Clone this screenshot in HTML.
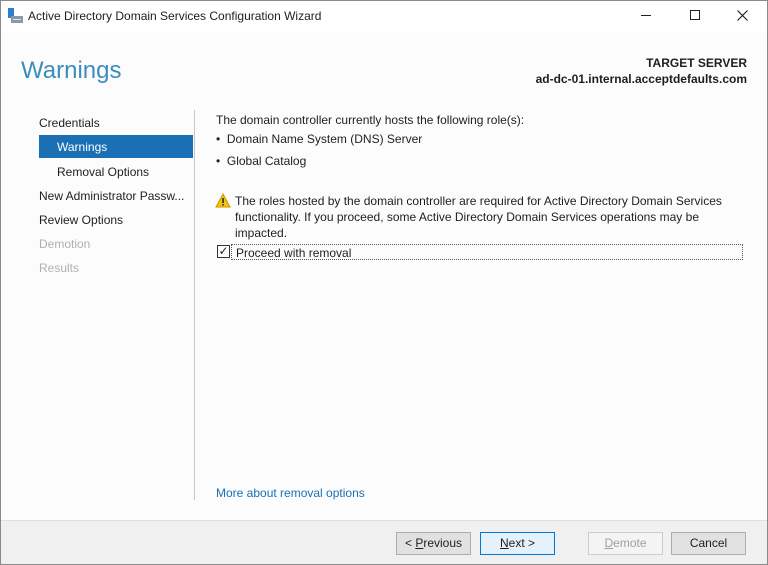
<!DOCTYPE html><html><head><style>
*{margin:0;padding:0;box-sizing:border-box}
body{width:768px;height:565px;overflow:hidden;font-family:"Liberation Sans",sans-serif;font-size:12px;color:#1e1e1e;background:#fcfcfc;position:relative}
.a{position:absolute;white-space:nowrap}
.btn{position:absolute;top:532px;height:23px;width:75px;border:1px solid #adadad;background:#e1e1e1;text-align:center;line-height:21px;font-size:12px}
</style></head><body>
<div class="a" style="left:0;top:0;width:768px;height:565px;border:1px solid #8a8a8a;z-index:5;pointer-events:none"></div>
<div class="a" style="left:0;top:0;width:768px;height:32px;background:#fff"></div>
<svg class="a" style="left:8px;top:8px" width="16" height="16"><rect x="0" y="0" width="6" height="10" fill="#2b7fd0"/><rect x="3" y="8" width="12" height="7" fill="#8a98a8"/><rect x="5" y="11" width="8" height="1" fill="#dde"/></svg>
<div class="a" style="left:28px;top:9px;font-size:12px">Active Directory Domain Services Configuration Wizard</div>
<div class="a" style="left:641px;top:15px;width:10px;height:1px;background:#222"></div>
<div class="a" style="left:690px;top:10px;width:10px;height:10px;border:1px solid #222"></div>
<svg class="a" style="left:737px;top:10px" width="11" height="11"><path d="M0.5 0.5L10.5 10.5M10.5 0.5L0.5 10.5" stroke="#222" stroke-width="1.2"/></svg>
<div class="a" style="left:21px;top:57px;font-size:24px;color:#3b8dbd">Warnings</div>
<div class="a" style="right:21px;top:55px;font-weight:bold;text-align:right;line-height:16px">TARGET SERVER<br>ad-dc-01.internal.acceptdefaults.com</div>
<div class="a" style="left:39px;top:116px">Credentials</div>
<div class="a" style="left:39px;top:135px;width:154px;height:23px;background:#1a6fb5;color:#fff;padding:5px 0 0 18px">Warnings</div>
<div class="a" style="left:57px;top:165px">Removal Options</div>
<div class="a" style="left:39px;top:189px">New Administrator Passw...</div>
<div class="a" style="left:39px;top:213px">Review Options</div>
<div class="a" style="left:39px;top:237px;color:#b0b0b0">Demotion</div>
<div class="a" style="left:39px;top:261px;color:#b0b0b0">Results</div>
<div class="a" style="left:194px;top:110px;width:1px;height:390px;background:#c8c8c8"></div>
<div class="a" style="left:216px;top:113px">The domain controller currently hosts the following role(s):</div>
<div class="a" style="left:216px;top:132px">•&nbsp; Domain Name System (DNS) Server</div>
<div class="a" style="left:216px;top:154px">•&nbsp; Global Catalog</div>
<svg class="a" style="left:215px;top:193px" width="16" height="15"><path d="M8 1L15 14H1Z" fill="#f5c211" stroke="#c99a00"/><rect x="7.3" y="5" width="1.5" height="5" fill="#222"/><rect x="7.3" y="11" width="1.5" height="1.5" fill="#222"/></svg>
<div class="a" style="left:235px;top:193px;line-height:16px">The roles hosted by the domain controller are required for Active Directory Domain Services<br>functionality. If you proceed, some Active Directory Domain Services operations may be<br>impacted.</div>
<div class="a" style="left:217px;top:245px;width:13px;height:13px;border:1px solid #333;background:#fff;font-size:12px;line-height:11px;text-align:center">✓</div>
<div class="a" style="left:231px;top:244px;width:512px;height:16px;border:1px dotted #555;padding:1px 0 0 4px">Proceed with removal</div>
<div class="a" style="left:216px;top:486px;color:#1a6fb5">More about removal options</div>
<div class="a" style="left:0;top:520px;width:768px;height:45px;background:#f0f0f0;border-top:1px solid #dfdfdf"></div>
<div class="btn" style="left:396px">&lt; <u>P</u>revious</div>
<div class="btn" style="left:480px;border-color:#0078d7;background:#e5f1fb"><u>N</u>ext &gt;</div>
<div class="btn" style="left:588px;border-color:#ccc;background:#f4f4f4;color:#a0a0a0"><u>D</u>emote</div>
<div class="btn" style="left:671px">Cancel</div>
</body></html>
